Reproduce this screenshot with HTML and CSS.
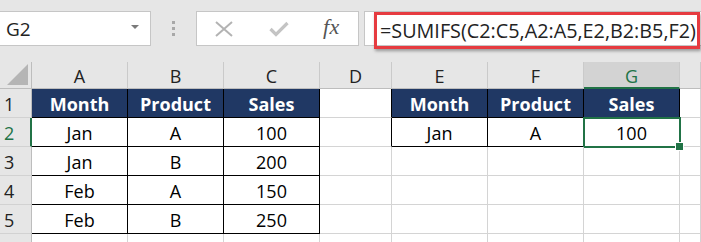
FILE: index.html
```html
<!DOCTYPE html>
<html>
<head>
<meta charset="utf-8">
<link rel="stylesheet" href="styles.css">
</head>
<body>
<div class="toolbar">
  <div class="namebox">
    <span class="nb-text">G2</span>
    <span class="nb-arrow"></span>
  </div>
  <div class="dots"><i></i><i></i><i></i></div>
  <div class="icons">
    <svg class="ic" width="18" height="16" viewBox="0 0 18 16"><path d="M1 1 L17 15 M17 1 L1 15" stroke="#b3b3b3" stroke-width="2" fill="none"/></svg>
    <svg class="ic" width="20" height="16" viewBox="0 0 20 16"><path d="M1.5 8 L7 13.5 L18.5 2" stroke="#c4c4c4" stroke-width="3.2" fill="none"/></svg>
    <span class="fx">fx</span>
  </div>
  <div class="formula">
    <span class="hl">=SUMIFS(C2:C5,A2:A5,E2,B2:B5,F2)</span>
  </div>
</div>
<div class="grid">
  <div class="corner"><svg width="21" height="21" viewBox="0 0 21 21"><path d="M21 0 L21 21 L0 21 Z" fill="#b5b5b5"/></svg></div>
  <div class="ch">A</div><div class="ch">B</div><div class="ch">C</div><div class="ch">D</div><div class="ch">E</div><div class="ch">F</div><div class="ch sel">G</div><div class="ch"></div>

  <div class="rh">1</div>
  <div class="c hd">Month</div><div class="c hd">Product</div><div class="c hd">Sales</div><div class="c rb"></div>
  <div class="c hd">Month</div><div class="c hd">Product</div><div class="c hd">Sales</div><div class="c"></div>

  <div class="rh sel">2</div>
  <div class="c t">Jan</div><div class="c t">A</div><div class="c t">100</div><div class="c rb"></div>
  <div class="c t">Jan</div><div class="c t">A</div><div class="c t active">100</div><div class="c"></div>

  <div class="rh">3</div>
  <div class="c t">Jan</div><div class="c t">B</div><div class="c t">200</div><div class="c"></div>
  <div class="c"></div><div class="c"></div><div class="c"></div><div class="c"></div>

  <div class="rh">4</div>
  <div class="c t">Feb</div><div class="c t">A</div><div class="c t">150</div><div class="c"></div>
  <div class="c"></div><div class="c"></div><div class="c"></div><div class="c"></div>

  <div class="rh">5</div>
  <div class="c t">Feb</div><div class="c t">B</div><div class="c t">250</div><div class="c"></div>
  <div class="c"></div><div class="c"></div><div class="c"></div><div class="c"></div>

  <div class="rh"></div>
  <div class="c"></div><div class="c"></div><div class="c"></div><div class="c"></div>
  <div class="c"></div><div class="c"></div><div class="c"></div><div class="c"></div>
</div>
</body>
</html>
```

FILE: styles.css
```css
* { box-sizing: border-box; }
html, body { margin: 0; padding: 0; }
body {
  width: 701px;
  height: 242px;
  overflow: hidden;
  background: #ffffff;
  font-family: "Open Sans", "Noto Sans", sans-serif;
  color: #000;
}

.toolbar {
  height: 62px;
  background: #e6e6e6;
  display: flex;
  align-items: flex-start;
  padding-top: 11px;
}

.namebox {
  width: 151px;
  height: 35px;
  background: #fff;
  border: 1px solid #c6c6c6;
  border-left: none;
  display: flex;
  align-items: center;
  justify-content: space-between;
  padding: 0 11px 0 6px;
}
.nb-text {
  font-size: 19px;
  color: #222;
}
.nb-arrow {
  width: 0;
  height: 0;
  border-left: 4px solid transparent;
  border-right: 4px solid transparent;
  border-top: 4px solid #7a7a7a;
  margin-bottom: 3px;
}

.dots {
  width: 45px;
  height: 35px;
  display: flex;
  flex-direction: column;
  align-items: center;
  justify-content: center;
  gap: 3px;
}
.dots i {
  display: block;
  width: 3px;
  height: 3px;
  background: #a8a8a8;
}

.icons {
  width: 163px;
  height: 35px;
  background: #fff;
  border: 1px solid #c6c6c6;
  display: flex;
  align-items: center;
  padding-left: 18px;
  gap: 0;
}
.ic { display: block; }
.icons .ic:first-child { margin-right: 36px; }
.icons .ic:nth-child(2) { margin-right: 34px; }
.fx {
  font-family: "Liberation Serif", "DejaVu Serif", serif;
  font-style: italic;
  font-size: 22px;
  color: #555;
  letter-spacing: 0.5px;
  line-height: 1;
  margin-top: -3px;
}

.formula {
  margin-left: 5px;
  flex: 1;
  height: 35px;
  background: #fff;
  border: 1px solid #c6c6c6;
  border-right: none;
  position: relative;
}
.hl {
  position: absolute;
  left: 9px;
  top: 0;
  width: 326px;
  height: 37px;
  border: 3px solid #e63b40;
  box-shadow: 1px 2px 3px rgba(0,0,0,0.35);
  display: flex;
  align-items: center;
  padding-left: 3px;
  font-size: 19.8px;
  color: #222;
  white-space: nowrap;
}

.grid {
  display: grid;
  grid-template-columns: 32px 96px 96px 96px 72px 96px 96px 96px 1fr;
  grid-template-rows: 27px repeat(6, 29px);
}

.corner {
  background: #e6e6e6;
  border-right: 1px solid #bdbdbd;
  border-bottom: 1px solid #bdbdbd;
  display: flex;
  align-items: flex-end;
  justify-content: flex-end;
  padding: 0 3px 3px 0;
}

.ch {
  background: #e6e6e6;
  border-right: 1px solid #cacaca;
  border-bottom: 1px solid #bdbdbd;
  display: flex;
  align-items: center;
  justify-content: center;
  font-size: 18px;
  color: #222;
  padding-top: 2px;
}
.ch.sel {
  background: #d3d3d3;
  color: #217346;
  border-bottom: 2px solid #217346;
}

.rh {
  background: #e6e6e6;
  border-right: 1px solid #bdbdbd;
  border-bottom: 1px solid #d2d2d2;
  display: flex;
  align-items: center;
  padding-left: 4px;
  font-size: 18px;
  color: #222;
  padding-top: 1px;
}
.rh.sel {
  color: #217346;
  border-right: 2px solid #217346;
}

.c {
  border-right: 1px solid #d4d4d4;
  border-bottom: 1px solid #d4d4d4;
  display: flex;
  align-items: center;
  justify-content: center;
  font-size: 18px;
  color: #000;
  padding-top: 2px;
  position: relative;
}
.c.hd {
  background: #203864;
  color: #fff;
  font-weight: 700;
  border-right-color: #000;
  border-bottom-color: #000;
}
.c.t {
  border-right-color: #000;
  border-bottom-color: #000;
}
.c.rb {
  border-right-color: #000;
}

.c.active::after {
  content: "";
  position: absolute;
  left: -1px;
  top: -1px;
  right: -2px;
  bottom: -2px;
  border: 2px solid #217346;
}
.c.active::before {
  content: "";
  position: absolute;
  right: -5px;
  bottom: -5px;
  width: 7px;
  height: 7px;
  background: #217346;
  border: 1px solid #fff;
  z-index: 2;
}
```
